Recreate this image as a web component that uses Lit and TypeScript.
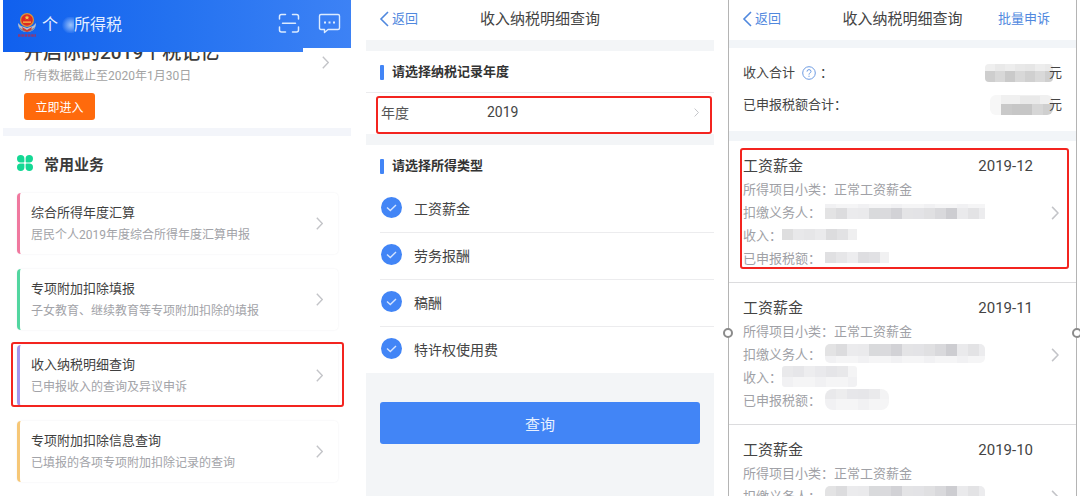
import { LitElement, html, css, svg } from "lit";
import { customElement, property } from "lit/decorators.js";

const base = css`
  * { box-sizing: border-box; }
  h1, h2, h3, p, ul, dl, dd { margin: 0; padding: 0; font-weight: 400; font-size: inherit; }
  ul { list-style: none; }
  a { color: inherit; text-decoration: none; }
  button { font: inherit; border: 0; padding: 0; background: none; color: inherit; cursor: pointer; }
  svg { display: block; flex: none; }
`;

const chevron = (w = 7, h = 13) => html`
  <svg width=${w} height=${h} viewBox="0 0 7 13" fill="none" stroke="#c3c4c8" stroke-width="1.4" aria-hidden="true">
    <path d="M.8.8l5.500 5.700L.8 12.200" />
  </svg>`;

/* One block of a mosaic: x, y, width, height, grey level */
type Block = [number, number, number, number, string];

const strip = (y: number, h: number, step: number, shades: string[]): Block[] =>
  shades.map((s, i) => [i * step, y, step, h, s] as Block);

const mosaic = (w: number, h: number, blocks: Block[], r = 0) => html`
  <svg class="mosaic" width=${w} height=${h} viewBox="0 0 ${w} ${h}" style="border-radius:${r}px" aria-hidden="true">
    ${blocks.map(([x, y, bw, bh, c]) => svg`<rect x=${x} y=${y} width=${bw} height=${bh} fill=${c} shape-rendering="crispEdges" />`)}
  </svg>`;

const payerShades = ["#e3e3e4", "#dcdcde", "#ebebed", "#eaeaec", "#d9dadc", "#dadadd", "#d2d2d6", "#e4e4e6", "#e3e3e6", "#e0e0e2", "#d9d9dc", "#cdcdd1", "#eaeaec", "#e3e3e5", "#ececee"];
const lightShades = payerShades.map((_, i) => (i % 3 ? "#f5f5f6" : "#f1f1f3"));
const sumShades = ["#cecece", "#d8d8d8", "#cacaca", "#d8d8d8", "#d0d0d0", "#d9d9d9", "#cfcfcf"];

@customElement("tax-home")
export class TaxHome extends LitElement {
  static styles = [base, css`
    :host { display: block; background: #fff; }
    .bar { position: relative; z-index: 1; display: flex; align-items: flex-start; height: 52px; padding: 11px 10px 0 13px;
      color: #fff; background: linear-gradient(90deg, #1060ee, #2472f0 50%, #3d82f5);
      clip-path: polygon(0 0, 100% 0, 100% 48px, calc(100% - 48px) 48px, calc(100% - 48px) 100%, 0 100%); }
    .brand { display: flex; align-items: center; flex: 1; font-size: 16px; line-height: 24px; color: #e4eeff; }
    .brand svg { margin: 1px 4px 0 0; }
    .smudge { width: 16px; height: 16px; background: radial-gradient(circle at 80% 50%, #9cc3fb, transparent 60%); }
    .tools { display: flex; gap: 17px; }
    .promo { display: flex; justify-content: space-between; padding: 0 22px 8px 21px; border-bottom: 8px solid #f3f5fa; }
    .promo h2 { margin-top: -12px; font-size: 19px; line-height: 26px; font-weight: 500; color: #3b3b3b; }
    .promo p { margin-top: 1px; font-size: 12px; line-height: 18px; color: #a3a3a3; }
    .promo svg { margin-top: 4px; }
    .go { margin-top: 8px; width: 71px; height: 27px; border-radius: 3px; background: #ff6a0c; color: #fff; font-size: 12px; }
    .heading { display: flex; align-items: center; gap: 11px; height: 57px; padding: 0 14px 3px; font-size: 15px; font-weight: 700; color: #3a3a3a; }
    .cards { display: grid; gap: 15px; padding: 0 13px 0 14px; }
    .card { position: relative; display: flex; align-items: center; justify-content: space-between; height: 61px;
      padding: 0 15px 0 11px; border-left: 3px solid; border-radius: 4px; box-shadow: 0 0 2px #ececef; }
    .pink { border-color: #f0799f; }
    .green { border-color: #52d6a0; }
    .violet { border-color: #a394ec; }
    .amber { border-color: #f6c777; }
    .card h3 { font-size: 13px; line-height: 20px; color: #3f3f3f; }
    .card p { margin-top: 3px; font-size: 12px; line-height: 18px; color: #a2a3a8; white-space: nowrap; }
    .marked::after { content: ""; position: absolute; inset: -3px -6px -1px -9px; border: 2px solid #f3241f; border-radius: 3px; }
  `];

  private items = [
    { tone: "pink", title: "综合所得年度汇算", note: "居民个人2019年度综合所得年度汇算申报" },
    { tone: "green", title: "专项附加扣除填报", note: "子女教育、继续教育等专项附加扣除的填报" },
    { tone: "violet marked", title: "收入纳税明细查询", note: "已申报收入的查询及异议申诉" },
    { tone: "amber", title: "专项附加扣除信息查询", note: "已填报的各项专项附加扣除记录的查询" },
  ];

  render() {
    return html`
      <header class="bar">
        <h1 class="brand">
          <svg width="22" height="26" viewBox="0 0 22 26" aria-hidden="true">
            <path d="M2 11c0 6 4 9 9 9s9-3 9-9l-3 3-6 2-6-2z" fill="#b9c0cc" />
            <path d="M3 15c2 4 5 5 8 5s6-1 8-5l-3 2-5 1-5-1z" fill="#7f8896" />
            <circle cx="11" cy="8" r="7" fill="#d9963a" />
            <circle cx="11" cy="8" r="5.8" fill="#dd2a23" />
            <path d="M11 3.2l.7 1.5 1.6.1-1.2 1.1.4 1.6-1.5-.8-1.5.8.4-1.6-1.2-1.1 1.6-.1zM7 9.5h8v1.3H7z" fill="#f7c64a" />
            <path d="M6 15l5 3 5-3-1 3-4 2-4-2z" fill="#d4392d" />
            <path d="M2 23.5h18" stroke="#8c3a75" stroke-width="2.4" stroke-dasharray="2.6 .7" />
          </svg>
          个<span class="smudge"></span>所得税
        </h1>
        <div class="tools">
          <button aria-label="扫一扫">
            <svg width="24" height="24" viewBox="0 0 24 24" fill="none" stroke="#dcebff" stroke-width="1.5" stroke-linecap="round">
              <path d="M2.5 8V5.500q0-2 2-2H8.500M15.500 3.500h4q2 0 2 2V8M2.500 16v3q0 2 2 2h4M15.500 21h4q2 0 2-2v-3M5.500 12.300h13" />
            </svg>
          </button>
          <button aria-label="消息">
            <svg width="23" height="24" viewBox="0 0 23 24" fill="none" stroke="#dcebff" stroke-width="1.4" stroke-linejoin="round">
              <path d="M3 3.500h17q1.500 0 1.500 1.500v12q0 1.500-1.500 1.500H10l-3.500 3V18.500H3q-1.500 0-1.500-1.500V5q0-1.500 1.500-1.500z" />
              <path d="M6 11.500h2M10.500 11.500h2M15 11.500h2" stroke-width="2" />
            </svg>
          </button>
        </div>
      </header>
      <section class="promo">
        <div>
          <h2>开启你的2019个税记忆</h2>
          <p>所有数据截止至2020年1月30日</p>
          <button class="go">立即进入</button>
        </div>
        ${chevron()}
      </section>
      <h2 class="heading">
        <svg width="16" height="16" viewBox="0 0 16 16" fill="#14d894" aria-hidden="true">
          <path d="M3.700 0A3.700 3.700 0 0 1 7.400 3.700V6.400q0 1-1 1H3.700A3.700 3.700 0 0 1 3.700 0z" />
          <path d="M12.300 0a3.700 3.700 0 0 1 0 7.400H9.600q-1 0-1-1V3.700A3.700 3.700 0 0 1 12.300 0z" />
          <path d="M3.700 8.600h2.700q1 0 1 1v2.700A3.700 3.700 0 1 1 3.700 8.600z" />
          <path d="M9.600 8.600h2.700A3.700 3.700 0 1 1 8.600 12.300V9.600q0-1 1-1z" />
        </svg>
        常用业务
      </h2>
      <nav class="cards">
        ${this.items.map((i) => html`
          <a class="card ${i.tone}" href="#">
            <div><h3>${i.title}</h3><p>${i.note}</p></div>
            ${chevron()}
          </a>`)}
      </nav>`;
  }
}

@customElement("nav-bar")
export class NavBar extends LitElement {
  @property() action = "";
  static styles = [base, css`
    :host { display: grid; grid-template-columns: 1fr auto 1fr; align-items: center; height: 40px; padding: 0 13px 2px; background: #fff; }
    .link { display: flex; align-items: center; gap: 3px; font-size: 13px; line-height: 20px; color: #5088de; white-space: nowrap; }
    .end { justify-self: end; margin-right: 13px; }
    h1 { font-size: 15px; line-height: 22px; color: #444; }
  `];
  render() {
    return html`
      <a class="link" href="#">
        <svg width="10" height="16" viewBox="0 0 10 16" fill="none" stroke="#5088de" stroke-width="1.6" aria-hidden="true"><path d="M9 1L2 8l7 7" /></svg>返回
      </a>
      <h1>收入纳税明细查询</h1>
      ${this.action ? html`<a class="link end" href="#">${this.action}</a>` : ""}`;
  }
}

@customElement("tax-query")
export class TaxQuery extends LitElement {
  static styles = [base, css`
    :host { display: block; background: #f3f5f7; }
    .block { background: #fff; margin-top: 11px; }
    h2 { display: flex; align-items: center; gap: 8px; height: 41px; padding: 0 0 3px 14px; font-size: 13px; font-weight: 700; color: #333; }
    h2::before { content: ""; width: 4px; height: 15px; margin-top: 5px; border-radius: 1px; background: #4285f6; }
    .year { position: relative; display: flex; align-items: center; height: 42px; padding: 0 15px 3px; border-top: 1px solid #ececee; font-size: 14px; color: #555; }
    .year::after { content: ""; position: absolute; inset: 3px 2px 0 10px; border: 2px solid #f3241f; border-radius: 3px; pointer-events: none; }
    .year label { width: 106px; }
    .year select { appearance: none; flex: 1; border: 0; margin: 0; padding: 0; background: none; font: inherit; color: #444; }
    li { margin-left: 14px; border-top: 1px solid #ececee; }
    li:first-child { border-top: 0; }
    .type { display: grid; grid-template-columns: 21px 1fr; column-gap: 12px; align-items: center; height: 46px; padding: 0 0 3px 1px; font-size: 14px; color: #444; }
    .type input { appearance: none; grid-area: 1 / 1; width: 21px; height: 21px; margin: 0; border-radius: 50%; border: 1px solid #c5c8ce; }
    .type input:checked { border: 0; background: #4285f6; }
    .type svg { grid-area: 1 / 1; justify-self: center; pointer-events: none; z-index: 1; }
    .submit { display: block; width: calc(100% - 28px); height: 42px; margin: 29px 14px; border-radius: 3px; background: #4285f6; color: #e9f1ff; font-size: 15px; }
  `];
  render() {
    return html`
      <nav-bar></nav-bar>
      <section class="block">
        <h2>请选择纳税记录年度</h2>
        <div class="year">
          <label for="year">年度</label>
          <select id="year"><option>2019</option></select>
          ${chevron(5, 9)}
        </div>
      </section>
      <section class="block">
        <h2>请选择所得类型</h2>
        <ul>
          ${["工资薪金", "劳务报酬", "稿酬", "特许权使用费"].map((t) => html`
            <li><label class="type">
              <input type="checkbox" checked />
              <svg width="11" height="8" viewBox="0 0 11 8" fill="none" stroke="#d5e4ff" stroke-width="1.4" aria-hidden="true"><path d="M1 3.500l3.300 3L10 1" /></svg>
              <span>${t}</span>
            </label></li>`)}
        </ul>
      </section>
      <button class="submit">查询</button>`;
  }
}

@customElement("tax-records")
export class TaxRecords extends LitElement {
  static styles = [base, css`
    :host { position: relative; display: block; margin-left: -1px; background: #fff; border: solid #b4b4b4; border-width: 0 1px; }
    .totals { border: solid #f2f5f8; border-width: 8px 0 10px; padding: 9px 14px 10px; font-size: 13px; line-height: 32px; color: #444; }
    .total { display: flex; justify-content: space-between; }
    .total dt, .total dd { display: flex; align-items: center; }
    .total button { margin: 0 4px 0 7px; }
    .total .mosaic { margin-right: -4px; }
    .entry { position: relative; height: 142px; padding: 13px 14px 12px; border-bottom: 1px solid #dcdcde; }
    .top { display: flex; justify-content: space-between; padding-right: 29px; font-size: 15px; line-height: 24px; color: #444; }
    .fields { display: flex; align-items: center; justify-content: space-between; margin-top: -1px; }
    .line { display: flex; align-items: center; height: 23px; font-size: 13px; color: #a0a1a6; white-space: nowrap; }
    .wide { gap: 4px; }
    .fields > svg { margin: -21px 3px 0 0; }
    .marked::after { content: ""; position: absolute; inset: 7px 7px 13px 11px; border: 2px solid #f3241f; border-radius: 3px; pointer-events: none; }
    .handle { position: absolute; top: 328px; width: 10px; height: 10px; border: 2px solid #8b8b8b; border-radius: 50%; background: #fff; }
    .west { left: -6px; }
    .east { right: -6px; }
  `];

  private entries = [
    { month: "2019-12", soft: false },
    { month: "2019-11", soft: true },
    { month: "2019-10", soft: true },
  ];

  private payer(soft: boolean) {
    return soft
      ? mosaic(160, 19, [...strip(0, 12, 11, payerShades), ...strip(12, 7, 11, lightShades)], 5)
      : mosaic(160, 15, [...strip(0, 4, 11, lightShades), ...strip(4, 11, 11, payerShades)]);
  }

  private income(soft: boolean) {
    const shades = ["#dededf", "#e8e8ea", "#e6e6e8", "#eaeaec", "#dcdcde", "#e2e2e4", "#efeff0"];
    return soft
      ? mosaic(75, 21, [...strip(0, 11, 11, ["#e9e9eb", "#e6e6e9", "#ededef", "#e9e9ec", "#e5e5e8", "#e8e8ea", "#f4f4f5"]), ...strip(11, 10, 11, lightShades.slice(0, 7))], 3)
      : mosaic(75, 11, strip(0, 11, 11, shades));
  }

  private tax(soft: boolean) {
    return soft
      ? mosaic(64, 21, [...strip(0, 10, 11, ["#e9e9eb", "#ededee", "#e7e7ea", "#e6e6e9", "#eaeaec", "#f3f3f4"]), ...strip(10, 11, 11, lightShades.slice(0, 6))], 8)
      : mosaic(64, 11, strip(0, 11, 11, ["#e0e0e2", "#e6e6e8", "#ededef", "#dedee1", "#e1e1e4", "#f1f1f2"]));
  }

  render() {
    return html`
      <nav-bar action="批量申诉"></nav-bar>
      <dl class="totals">
        <div class="total">
          <dt>收入合计
            <button aria-label="说明">
              <svg width="14" height="14" viewBox="0 0 14 14" fill="none" stroke="#6d9be2" aria-hidden="true">
                <circle cx="7" cy="7" r="6.300" /><path d="M5 5.600Q5 3.600 7 3.600T9 5.500Q9 6.500 7.800 7.100Q7 7.500 7 8.600M7 9.700v1.200" />
              </svg>
            </button>：</dt>
          <dd>${mosaic(68, 18, [...strip(0, 7, 10, ["#efefef", "#e9e9e9", "#ededed", "#e8e8e8", "#e6e6e6", "#ededed", "#eaeaea"]), ...strip(7, 11, 10, sumShades)], 4)}元</dd>
        </div>
        <div class="total">
          <dt>已申报税额合计：</dt>
          <dd>${mosaic(63, 20, [[0, 0, 11, 20, "#f7f7f7"], [11, 0, 52, 9, "#f0f0f0"], [30, 1, 20, 8, "#e9e9e9"], [11, 9, 11, 11, "#c9c9c9"], [22, 9, 20, 11, "#c6c6c6"], [42, 9, 11, 11, "#d6d6d6"], [53, 9, 10, 11, "#cfcfcf"]], 6)}元</dd>
        </div>
      </dl>
      ${this.entries.map((e, i) => html`
        <article class="entry ${i === 0 ? "marked" : ""}">
          <div class="top"><h2>工资薪金</h2><time>${e.month}</time></div>
          <div class="fields">
            <div>
              <p class="line">所得项目小类：正常工资薪金</p>
              <p class="line wide">扣缴义务人：${this.payer(e.soft)}</p>
              <p class="line">收入：${this.income(e.soft)}</p>
              <p class="line wide">已申报税额：${this.tax(e.soft)}</p>
            </div>
            ${chevron(8, 14)}
          </div>
        </article>`)}
      <span class="handle west"></span>
      <span class="handle east"></span>`;
  }
}

@customElement("app-root")
export class AppRoot extends LitElement {
  static styles = css`
    :host { display: grid; grid-template-columns: repeat(3, minmax(0, 1fr)); gap: 15px; height: 100vh; padding: 0 3px; box-sizing: border-box;
      overflow: hidden; background: #fff; font-family: Roboto, "Noto Sans CJK SC", sans-serif; }
  `;
  render() {
    return html`<tax-home></tax-home><tax-query></tax-query><tax-records></tax-records>`;
  }
}
